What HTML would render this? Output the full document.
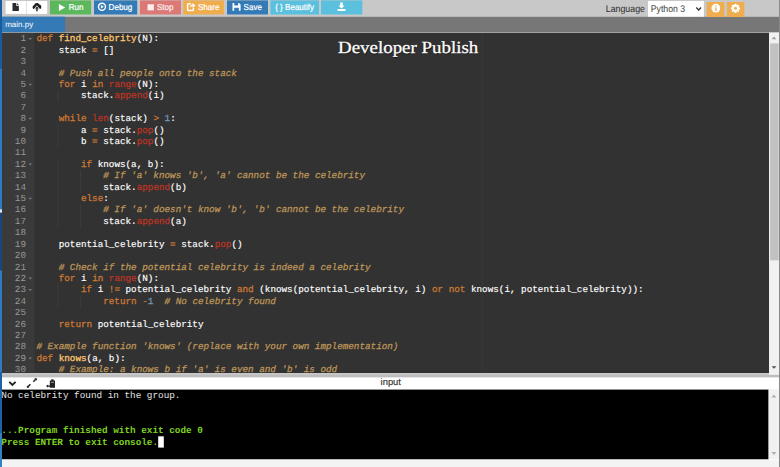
<!DOCTYPE html>
<html>
<head>
<meta charset="utf-8">
<title>main.py - Developer Publish</title>
<style>
html,body{margin:0;padding:0;}
body{text-rendering:geometricPrecision;width:780px;height:467px;overflow:hidden;position:relative;background:#f3f3f3;font-family:"Liberation Sans",sans-serif;}
.abs{position:absolute;}
svg{position:absolute;overflow:visible;}
.btn{position:absolute;top:0.5px;height:14px;color:#fff;font-size:8.05px;line-height:14px;white-space:nowrap;-webkit-text-stroke:0.2px;}
.btn span{position:absolute;top:0;transform:scaleY(1.07);transform-origin:0 3.5px;}
#tab{left:2px;top:17px;width:63px;height:15px;color:#fff;font-size:8px;line-height:15px;}
#tab span{position:absolute;left:3.2px;top:0;}
#code{position:absolute;left:0;top:0;width:769px;height:373px;overflow:hidden;font-family:"Liberation Mono","DejaVu Sans Mono",monospace;font-size:9.29px;color:#fff;}
.ln{position:absolute;left:36.4px;height:11.41px;line-height:11.41px;white-space:pre;-webkit-text-stroke:0.15px;}
.gn{position:absolute;left:2px;width:24px;text-align:right;height:11.41px;line-height:11.41px;color:#999;}
.k,.s,.n,.f,.c{-webkit-text-stroke:0.28px;}
.k{color:#CC7833;}
.s{color:#B83426;}
.n{color:#6C99BB;}
.f{color:#FFC66D;}
.c{color:#BC9458;font-style:italic;}
.i{color:#fff;}
#title{left:338.1px;top:35.5px;color:#fff;font-family:"Liberation Serif","DejaVu Serif",serif;font-size:17px;line-height:24px;white-space:nowrap;transform:scaleX(1.113);transform-origin:0 0;-webkit-text-stroke:0.3px #fff;text-shadow:0.6px 0.7px 0.8px rgba(0,0,0,0.7);}
#chead{left:2px;top:377px;width:778px;height:12px;font-size:8.7px;color:#333;}
#console{left:2px;top:389.6px;width:766.6px;height:69.5px;font-family:"Liberation Mono","DejaVu Sans Mono",monospace;font-size:9.335px;color:#e4e4e4;overflow:hidden;}
.cl{position:absolute;left:-0.7px;white-space:pre;height:11.7px;line-height:11.7px;}
.g{color:#7ed321;font-weight:bold;}
</style>
</head>
<body>
<svg id="bg" style="left:0;top:0" width="780" height="467" viewBox="0 0 780 467">
<rect x="0" y="0" width="780" height="467" fill="#f3f3f3"/>
<rect x="0" y="0" width="780" height="16.7" fill="#c8c8c8"/>
<rect x="0" y="16.7" width="780" height="15.5" fill="#777"/>
<rect x="0" y="32.2" width="780" height="0.9" fill="#959595"/>
<rect x="0" y="16.7" width="65.1" height="15.5" fill="#337ab7"/>
<rect x="0" y="33" width="769.1" height="340.3" fill="#323232"/>
<rect x="0" y="33" width="34.6" height="340.3" fill="#3a3a3a"/>
<rect x="481.8" y="33" width="0.8" height="340.3" fill="#3a3a3a"/>
<rect x="57.69" y="90.35" width="0.7" height="11.41" fill="#404040"/>
<rect x="57.69" y="124.58" width="0.7" height="11.41" fill="#404040"/>
<rect x="57.69" y="135.99" width="0.7" height="11.41" fill="#404040"/>
<rect x="57.69" y="158.81" width="0.7" height="11.41" fill="#404040"/>
<rect x="57.69" y="170.22" width="0.7" height="11.41" fill="#404040"/>
<rect x="79.99" y="170.22" width="0.7" height="11.41" fill="#404040"/>
<rect x="57.69" y="181.63" width="0.7" height="11.41" fill="#404040"/>
<rect x="79.99" y="181.63" width="0.7" height="11.41" fill="#404040"/>
<rect x="57.69" y="193.04" width="0.7" height="11.41" fill="#404040"/>
<rect x="57.69" y="204.45" width="0.7" height="11.41" fill="#404040"/>
<rect x="79.99" y="204.45" width="0.7" height="11.41" fill="#404040"/>
<rect x="57.69" y="215.86" width="0.7" height="11.41" fill="#404040"/>
<rect x="79.99" y="215.86" width="0.7" height="11.41" fill="#404040"/>
<rect x="57.69" y="284.32" width="0.7" height="11.41" fill="#404040"/>
<rect x="57.69" y="295.73" width="0.7" height="11.41" fill="#404040"/>
<rect x="79.99" y="295.73" width="0.7" height="11.41" fill="#404040"/>
<rect x="0" y="373.3" width="780" height="4.3" fill="#bdbdbd"/>
<rect x="0" y="373.3" width="780" height="1.2" fill="#cdcdcd"/>
<rect x="0" y="377.2" width="780" height="0.6" fill="#e2e2e2"/>
<rect x="0" y="377.7" width="780" height="11.9" fill="#fff"/>
<rect x="769.1" y="32.5" width="10" height="342.3" fill="#f1f1f1"/>
<rect x="770.1" y="43.4" width="8.6" height="216.9" fill="#c1c1c1"/>
<path d="M771.6 39.2L774 36.6L776.4 39.2Z" fill="#a3a3a3"/>
<path d="M771.6 366.2L774 368.8L776.4 366.2Z" fill="#505050"/>
<rect x="0" y="459" width="780" height="1.1" fill="#fcfcfc"/>
<rect x="0" y="389.6" width="768.6" height="69.65" fill="#000"/>
<rect x="768.6" y="389.6" width="10.5" height="69.45" fill="#f1f1f1"/>
<path d="M771.4 397.4L773.9 394.5L776.4 397.4Z" fill="#b0b0b0"/>
<path d="M771.4 452L773.9 454.9L776.4 452Z" fill="#b0b0b0"/>
<rect x="0" y="0" width="2" height="68.5" fill="#185c9e"/>
<rect x="0" y="68.5" width="2" height="141" fill="#2e7ac4"/>
<rect x="0" y="209.3" width="2" height="3.5" fill="#dfe6ee"/>
<rect x="0" y="212.8" width="2" height="57.6" fill="#17467c"/>
<rect x="0" y="270.4" width="2" height="102" fill="#2e7ac4"/>
<rect x="0" y="372" width="2" height="61" fill="#1c62a8"/>
<rect x="0" y="433" width="2" height="34" fill="#3380c6"/>
<rect x="779" y="0" width="1" height="467" fill="#8a8a8a"/>
<g id="ch-icons" fill="#222">
<path d="M9.3 381.8L12.4 385L15.6 381.8" fill="none" stroke="#222" stroke-width="1.9"/>
<path d="M34.3 378.2H36.8V380.7Z"/><path d="M33.3 381.7L36 379" stroke="#222" stroke-width="1.5" fill="none"/>
<path d="M29.4 387.8H26.9V385.3Z"/><path d="M30.4 384.3L27.7 387" stroke="#222" stroke-width="1.5" fill="none"/>
<path d="M49.8 380.4H51.3V379.3H53.5V380.4H55V387.8H49.8Z"/>
<rect x="50.7" y="381.9" width="3.4" height="0.6" fill="#ddd"/>
<path d="M46 386.1L48.1 384.5V385.6H50V386.7H48.1V387.7Z"/>
</g>
<rect x="158.2" y="436.3" width="5.6" height="11.3" fill="#fff"/>
<path d="M28.4 38.00L30.2 40.00L32 38.00Z" fill="#7a7a7a"/>
<path d="M28.4 83.64L30.2 85.64L32 83.64Z" fill="#7a7a7a"/>
<path d="M28.4 117.87L30.2 119.87L32 117.87Z" fill="#7a7a7a"/>
<path d="M28.4 163.51L30.2 165.51L32 163.51Z" fill="#7a7a7a"/>
<path d="M28.4 197.74L30.2 199.74L32 197.74Z" fill="#7a7a7a"/>
<path d="M28.4 277.61L30.2 279.61L32 277.61Z" fill="#7a7a7a"/>
<path d="M28.4 289.02L30.2 291.02L32 289.02Z" fill="#7a7a7a"/>
<path d="M28.4 357.48L30.2 359.48L32 357.48Z" fill="#7a7a7a"/>
</svg>

<svg style="left:0;top:0" width="780" height="17" viewBox="0 0 780 17">
<g id="tb-bg">
<rect x="5.6" y="1" width="20.6" height="12.9" fill="#fff"/>
<rect x="26.7" y="1" width="20.5" height="12.9" fill="#fff"/>
<rect x="50" y="0.4" width="41.1" height="14.1" fill="#5cb85c"/>
<rect x="94" y="0.4" width="43.2" height="14.1" fill="#337ab7"/>
<rect x="140" y="0.4" width="41" height="14.1" fill="#dc7976"/>
<rect x="183.2" y="0.4" width="40.7" height="14.1" fill="#f0ad4e"/>
<rect x="227" y="0.4" width="41" height="14.1" fill="#337ab7"/>
<rect x="270.4" y="0.4" width="48.6" height="14.1" fill="#5bc0de"/>
<rect x="321" y="0.4" width="41.3" height="14.1" fill="#5bc0de"/>
<rect x="648" y="1" width="55.9" height="15.7" fill="#fff"/>
<rect x="706.75" y="2" width="17.6" height="15" fill="#f0ad4e"/>
<rect x="726.9" y="2" width="17.4" height="15" fill="#f0ad4e"/>
</g>
<g id="tb-icons">
<path d="M12.5 2.9H16V5.7H18.85V11H12.5Z M16.7 3L18.8 5H16.7Z" fill="#2b2b2b"/>
<path d="M34.7 9.2C33.3 9.2 32.6 8.2 32.6 7.2C32.6 6.2 33.2 5.4 34.2 5.2C34.4 3.8 35.5 2.9 36.9 2.9C38.1 2.9 39 3.6 39.4 4.6C40.5 4.7 41.3 5.6 41.3 6.9C41.3 8.2 40.4 9.2 39.2 9.2Z" fill="#1c1c1c"/>
<path d="M36.95 6.3L38.8 8.5H37.7V11.2H36.2V8.5H35.1Z" fill="#26263a" stroke="#fff" stroke-width="1.3" paint-order="stroke"/>
<path d="M58.9 3.9L65.2 7.5L58.9 11.05Z" fill="#fff"/>
<circle cx="101.95" cy="6.8" r="3.5" fill="none" stroke="#fff" stroke-width="1.4"/>
<path d="M100.9 5L103.9 6.8L100.9 8.6Z" fill="#fff"/>
<rect x="147.5" y="4.3" width="6.4" height="6.1" fill="#fbeeee"/>
<path d="M193.4 8.3V9.6A0.8 0.8 0 0 1 192.6 10.4H188.4A0.8 0.8 0 0 1 187.6 9.6V4.6A0.8 0.8 0 0 1 188.4 3.8H190.4" fill="none" stroke="#fff" stroke-width="1.5" stroke-linecap="round"/>
<path d="M192.6 3L195.5 5.4L192.6 7.8V6.3C191.2 6.3 190.4 6.8 189.9 8C189.9 5.9 191 4.7 192.6 4.5Z" fill="#fff"/>
<path d="M232.5 2.9H239L240.6 4.5V10.7H232.5Z M234.3 2.9V5.6H238.2V2.9Z M234.2 10.7V7.8H238.9V10.7Z" fill="#fff" fill-rule="evenodd"/>
<path d="M340.2 2.6H342.8V5.4H344.6L341.5 8.4L338.4 5.4H340.2Z M337.5 9.1H345.5V11H337.5Z" fill="#fff"/>
<path d="M696.3 7.5L698.7 10L701.1 7.5" fill="none" stroke="#333" stroke-width="1.3"/>
<circle cx="715.85" cy="8.1" r="4.4" fill="#fff"/>
<path d="M715.2 5.3H716.5V6.6H715.2Z M714.8 7.4H716.5V9.9H716.9V10.8H714.8V9.9H715.2V8.3H714.8Z" fill="#f0ad4e"/>
<g transform="translate(735.5 8.35)" fill="#fff"><circle r="3.3"/><rect x="-1" y="-4.6" width="2" height="9.2"/><rect x="-1" y="-4.6" width="2" height="9.2" transform="rotate(45)"/><rect x="-1" y="-4.6" width="2" height="9.2" transform="rotate(90)"/><rect x="-1" y="-4.6" width="2" height="9.2" transform="rotate(135)"/><circle r="1.5" fill="#f0ad4e"/></g>
</g>
</svg>
<div class="btn" style="left:50px;width:41px;"><span style="left:18.8px">Run</span></div>
<div class="btn" style="left:94px;width:43px;"><span style="left:14.6px">Debug</span></div>
<div class="btn" style="left:140px;width:41px;color:#fbeeee;"><span style="left:16.9px">Stop</span></div>
<div class="btn" style="left:183px;width:41px;"><span style="left:15.0px">Share</span></div>
<div class="btn" style="left:227px;width:41px;"><span style="left:16.6px">Save</span></div>
<div class="btn" style="left:270px;width:49px;"><span style="left:5.2px">{ } Beautify</span></div>
<div class="abs" style="left:605.8px;top:0.8px;height:17px;line-height:17px;font-size:8.8px;color:#2a2a2a;transform:scaleY(1.12);transform-origin:0 11.2px;">Language</div>
<div class="abs" style="left:650.8px;top:1.6px;height:15.7px;font-size:8.7px;line-height:15.7px;color:#444;transform:scaleY(1.12);transform-origin:0 10.6px;">Python 3</div>

<div id="tab" class="abs"><span>main.py</span></div>
<div id="code">
<div class="gn" style="top:33.30px">1</div>
<div class="gn" style="top:44.71px">2</div>
<div class="gn" style="top:56.12px">3</div>
<div class="gn" style="top:67.53px">4</div>
<div class="gn" style="top:78.94px">5</div>
<div class="gn" style="top:90.35px">6</div>
<div class="gn" style="top:101.76px">7</div>
<div class="gn" style="top:113.17px">8</div>
<div class="gn" style="top:124.58px">9</div>
<div class="gn" style="top:135.99px">10</div>
<div class="gn" style="top:147.40px">11</div>
<div class="gn" style="top:158.81px">12</div>
<div class="gn" style="top:170.22px">13</div>
<div class="gn" style="top:181.63px">14</div>
<div class="gn" style="top:193.04px">15</div>
<div class="gn" style="top:204.45px">16</div>
<div class="gn" style="top:215.86px">17</div>
<div class="gn" style="top:227.27px">18</div>
<div class="gn" style="top:238.68px">19</div>
<div class="gn" style="top:250.09px">20</div>
<div class="gn" style="top:261.50px">21</div>
<div class="gn" style="top:272.91px">22</div>
<div class="gn" style="top:284.32px">23</div>
<div class="gn" style="top:295.73px">24</div>
<div class="gn" style="top:307.14px">25</div>
<div class="gn" style="top:318.55px">26</div>
<div class="gn" style="top:329.96px">27</div>
<div class="gn" style="top:341.37px">28</div>
<div class="gn" style="top:352.78px">29</div>
<div class="gn" style="top:364.19px">30</div>
<div class="ln" style="top:33.30px"><span class="k">def</span> <span class="f">find_celebrity</span>(<span class="i">N</span>):</div>
<div class="ln" style="top:44.71px">    <span class="i">stack</span> <span class="k">=</span> []</div>
<div class="ln" style="top:56.12px"></div>
<div class="ln" style="top:67.53px">    <span class="c"># Push all people onto the stack</span></div>
<div class="ln" style="top:78.94px">    <span class="k">for</span> <span class="i">i</span> <span class="k">in</span> <span class="s">range</span>(<span class="i">N</span>):</div>
<div class="ln" style="top:90.35px">        <span class="i">stack</span>.<span class="s">append</span>(<span class="i">i</span>)</div>
<div class="ln" style="top:101.76px"></div>
<div class="ln" style="top:113.17px">    <span class="k">while</span> <span class="s">len</span>(<span class="i">stack</span>) <span class="k">&gt;</span> <span class="n">1</span>:</div>
<div class="ln" style="top:124.58px">        <span class="i">a</span> <span class="k">=</span> <span class="i">stack</span>.<span class="s">pop</span>()</div>
<div class="ln" style="top:135.99px">        <span class="i">b</span> <span class="k">=</span> <span class="i">stack</span>.<span class="s">pop</span>()</div>
<div class="ln" style="top:147.40px"></div>
<div class="ln" style="top:158.81px">        <span class="k">if</span> <span class="i">knows</span>(<span class="i">a</span>, <span class="i">b</span>):</div>
<div class="ln" style="top:170.22px">            <span class="c"># If &#x27;a&#x27; knows &#x27;b&#x27;, &#x27;a&#x27; cannot be the celebrity</span></div>
<div class="ln" style="top:181.63px">            <span class="i">stack</span>.<span class="s">append</span>(<span class="i">b</span>)</div>
<div class="ln" style="top:193.04px">        <span class="k">else</span>:</div>
<div class="ln" style="top:204.45px">            <span class="c"># If &#x27;a&#x27; doesn&#x27;t know &#x27;b&#x27;, &#x27;b&#x27; cannot be the celebrity</span></div>
<div class="ln" style="top:215.86px">            <span class="i">stack</span>.<span class="s">append</span>(<span class="i">a</span>)</div>
<div class="ln" style="top:227.27px"></div>
<div class="ln" style="top:238.68px">    <span class="i">potential_celebrity</span> <span class="k">=</span> <span class="i">stack</span>.<span class="s">pop</span>()</div>
<div class="ln" style="top:250.09px"></div>
<div class="ln" style="top:261.50px">    <span class="c"># Check if the potential celebrity is indeed a celebrity</span></div>
<div class="ln" style="top:272.91px">    <span class="k">for</span> <span class="i">i</span> <span class="k">in</span> <span class="s">range</span>(<span class="i">N</span>):</div>
<div class="ln" style="top:284.32px">        <span class="k">if</span> <span class="i">i</span> <span class="k">!=</span> <span class="i">potential_celebrity</span> <span class="k">and</span> (<span class="i">knows</span>(<span class="i">potential_celebrity</span>, <span class="i">i</span>) <span class="k">or</span> <span class="k">not</span> <span class="i">knows</span>(<span class="i">i</span>, <span class="i">potential_celebrity</span>)):</div>
<div class="ln" style="top:295.73px">            <span class="k">return</span> <span class="k">-</span><span class="n">1</span>  <span class="c"># No celebrity found</span></div>
<div class="ln" style="top:307.14px"></div>
<div class="ln" style="top:318.55px">    <span class="k">return</span> <span class="i">potential_celebrity</span></div>
<div class="ln" style="top:329.96px"></div>
<div class="ln" style="top:341.37px"><span class="c"># Example function &#x27;knows&#x27; (replace with your own implementation)</span></div>
<div class="ln" style="top:352.78px"><span class="k">def</span> <span class="f">knows</span>(<span class="i">a</span>, <span class="i">b</span>):</div>
<div class="ln" style="top:364.19px">    <span class="c"># Example: a knows b if &#x27;a&#x27; is even and &#x27;b&#x27; is odd</span></div>
</div>
<div id="title" class="abs">Developer Publish</div>
<div id="chead" class="abs"><span style="position:absolute;left:378.6px;top:-1px;line-height:12px;font-size:9.4px;-webkit-text-stroke:0.15px;">input</span></div>
<div id="console" class="abs">
<div class="cl" style="top:0.9px">No celebrity found in the group.</div>
<div class="cl g" style="top:35.75px">...Program finished with exit code 0</div>
<div class="cl g" style="top:47.45px">Press ENTER to exit console.</div>
</div>
</body>
</html>
